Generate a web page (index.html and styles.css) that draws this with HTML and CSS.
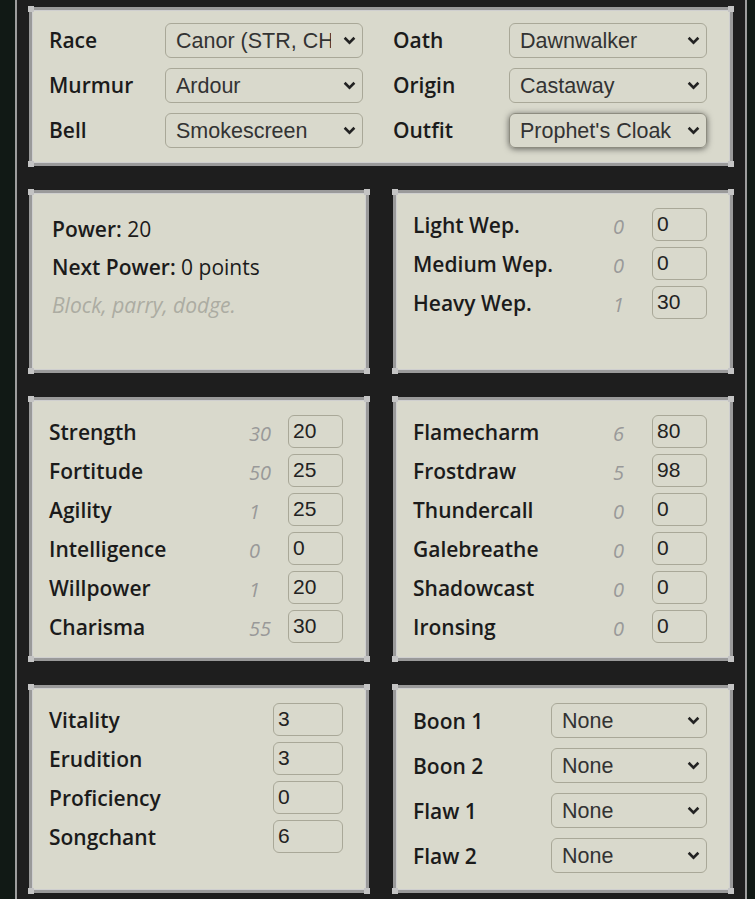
FILE: index.html
```html
<!DOCTYPE html>
<html lang="en">
<head>
    <meta charset="UTF-8">
    <meta name="viewport" content="width=device-width, initial-scale=1.0">
    <title>Character Sheet</title>
    <link rel="stylesheet" href="styles.css">
</head>
<body>
    <div class="sheet">
        <section class="panel identity">
            <div class="field">
                <label for="race">Race</label>
                <span class="pick">
                    <select id="race"><option>Canor (STR, CHA)</option></select>
                    <svg class="chev" viewBox="0 0 12 8"><path d="M1.5 1.5 L6 6 L10.5 1.5"/></svg>
                </span>
            </div>
            <div class="field">
                <label for="oath">Oath</label>
                <span class="pick">
                    <select id="oath"><option>Dawnwalker</option></select>
                    <svg class="chev" viewBox="0 0 12 8"><path d="M1.5 1.5 L6 6 L10.5 1.5"/></svg>
                </span>
            </div>
            <div class="field">
                <label for="murmur">Murmur</label>
                <span class="pick">
                    <select id="murmur"><option>Ardour</option></select>
                    <svg class="chev" viewBox="0 0 12 8"><path d="M1.5 1.5 L6 6 L10.5 1.5"/></svg>
                </span>
            </div>
            <div class="field">
                <label for="origin">Origin</label>
                <span class="pick">
                    <select id="origin"><option>Castaway</option></select>
                    <svg class="chev" viewBox="0 0 12 8"><path d="M1.5 1.5 L6 6 L10.5 1.5"/></svg>
                </span>
            </div>
            <div class="field">
                <label for="bell">Bell</label>
                <span class="pick">
                    <select id="bell"><option>Smokescreen</option></select>
                    <svg class="chev" viewBox="0 0 12 8"><path d="M1.5 1.5 L6 6 L10.5 1.5"/></svg>
                </span>
            </div>
            <div class="field">
                <label for="outfit">Outfit</label>
                <span class="pick">
                    <select id="outfit" class="active"><option>Prophet's Cloak</option></select>
                    <svg class="chev" viewBox="0 0 12 8"><path d="M1.5 1.5 L6 6 L10.5 1.5"/></svg>
                </span>
            </div>
        </section>

        <div class="row">
            <section class="panel tall power">
                <p><b>Power:</b> 20</p>
                <p><b>Next Power:</b> 0 points</p>
                <p class="hint">Block, parry, dodge.</p>
            </section>
            <section class="panel stats">
                <label>Light Wep.</label><span class="base">0</span><input value="0">
                <label>Medium Wep.</label><span class="base">0</span><input value="0">
                <label>Heavy Wep.</label><span class="base">1</span><input value="30">
            </section>
        </div>

        <div class="row">
            <section class="panel stats">
                <label>Strength</label><span class="base">30</span><input value="20">
                <label>Fortitude</label><span class="base">50</span><input value="25">
                <label>Agility</label><span class="base">1</span><input value="25">
                <label>Intelligence</label><span class="base">0</span><input value="0">
                <label>Willpower</label><span class="base">1</span><input value="20">
                <label>Charisma</label><span class="base">55</span><input value="30">
            </section>
            <section class="panel stats">
                <label>Flamecharm</label><span class="base">6</span><input value="80">
                <label>Frostdraw</label><span class="base">5</span><input value="98">
                <label>Thundercall</label><span class="base">0</span><input value="0">
                <label>Galebreathe</label><span class="base">0</span><input value="0">
                <label>Shadowcast</label><span class="base">0</span><input value="0">
                <label>Ironsing</label><span class="base">0</span><input value="0">
            </section>
        </div>

        <div class="row">
            <section class="panel vitals">
                <label>Vitality</label><input value="3">
                <label>Erudition</label><input value="3">
                <label>Proficiency</label><input value="0">
                <label>Songchant</label><input value="6">
            </section>
            <section class="panel boons">
                <label>Boon 1</label>
                <span class="pick">
                    <select><option>None</option></select>
                    <svg class="chev" viewBox="0 0 12 8"><path d="M1.5 1.5 L6 6 L10.5 1.5"/></svg>
                </span>
                <label>Boon 2</label>
                <span class="pick">
                    <select><option>None</option></select>
                    <svg class="chev" viewBox="0 0 12 8"><path d="M1.5 1.5 L6 6 L10.5 1.5"/></svg>
                </span>
                <label>Flaw 1</label>
                <span class="pick">
                    <select><option>None</option></select>
                    <svg class="chev" viewBox="0 0 12 8"><path d="M1.5 1.5 L6 6 L10.5 1.5"/></svg>
                </span>
                <label>Flaw 2</label>
                <span class="pick">
                    <select><option>None</option></select>
                    <svg class="chev" viewBox="0 0 12 8"><path d="M1.5 1.5 L6 6 L10.5 1.5"/></svg>
                </span>
            </section>
        </div>
    </div>
</body>
</html>
```

FILE: styles.css
```css
* {
    box-sizing: border-box;
}
body {
    margin: 0;
    background-color: #111915;
    font-family: "Open Sans", "Noto Sans", sans-serif;
    color: #1b1b1b;
}
.sheet {
    margin-left: 15px;
    width: 732px;
    min-height: 899px;
    background-color: #1e1e1e;
    border-left: 2px solid #9d9d9d;
    border-right: 2px solid #9d9d9d;
    padding: 7px 12px;
    display: flex;
    flex-direction: column;
    gap: 24px;
}
.row {
    display: grid;
    grid-template-columns: 1fr 1fr;
    gap: 24px;
}
.panel {
    position: relative;
    background-color: #d9d9cc;
    border: 3px solid #9a9a9a;
    box-shadow: inset 0 0 0 1px #cfcfcf;
    padding: 15px 23px 15px 17px;
}
/* little corner studs */
.panel::before {
    content: "";
    position: absolute;
    inset: -4px;
    pointer-events: none;
    background:
        linear-gradient(#c4c4c4, #c4c4c4) left top / 6px 6px no-repeat,
        linear-gradient(#c4c4c4, #c4c4c4) right top / 6px 6px no-repeat,
        linear-gradient(#c4c4c4, #c4c4c4) left bottom / 6px 6px no-repeat,
        linear-gradient(#c4c4c4, #c4c4c4) right bottom / 6px 6px no-repeat;
}
label, b {
    font-weight: 600;
    font-size: 21px;
}
.identity {
    display: grid;
    grid-template-columns: 1fr 1fr;
    column-gap: 30px;
    row-gap: 10px;
    padding-top: 13px;
    padding-bottom: 15px;
}
.field {
    display: grid;
    grid-template-columns: 116px 1fr;
    align-items: center;
}
.field label {
    padding-bottom: 2px;
}
.pick {
    position: relative;
    display: block;
}
select {
    appearance: none;
    width: 100%;
    height: 35px;
    font-family: "Liberation Sans", Arial, sans-serif;
    font-size: 21.5px;
    color: #333;
    background-color: transparent;
    border: 1px solid #a9a898;
    border-radius: 6px;
    padding: 0 31px 0 10px;
}
select.active {
    border-color: #8d8c80;
    box-shadow: 0 1px 6px rgba(0, 0, 0, 0.55);
}
.chev {
    position: absolute;
    right: 7px;
    top: 13px;
    width: 13px;
    height: 9px;
    pointer-events: none;
    fill: none;
    stroke: #222;
    stroke-width: 2.4;
}
input {
    width: 100%;
    height: 33px;
    font-family: "Liberation Sans", Arial, sans-serif;
    font-size: 21px;
    color: #222;
    background-color: transparent;
    border: 1px solid #a9a898;
    border-radius: 6px;
    padding: 0 4px 2px;
}
.tall {
    min-height: 183px;
}
.power {
    padding-top: 17px;
    padding-left: 20px;
}
.power p {
    margin: 0;
    font-size: 21px;
    line-height: 38px;
}
.power .hint {
    color: #acaca2;
    font-style: italic;
}
.stats {
    display: grid;
    grid-template-columns: 1fr 39px 55px;
    grid-auto-rows: 33px;
    row-gap: 6px;
    align-items: center;
    align-content: start;
}
.base {
    font-style: italic;
    font-size: 20px;
    color: #999;
    padding-top: 3px;
}
.vitals {
    display: grid;
    grid-template-columns: 1fr 70px;
    grid-auto-rows: 33px;
    row-gap: 6px;
    align-items: center;
    align-content: start;
}
.boons {
    display: grid;
    grid-template-columns: 1fr 156px;
    grid-auto-rows: 35px;
    row-gap: 10px;
    align-items: center;
    padding-top: 15px;
    padding-bottom: 17px;
}
```
